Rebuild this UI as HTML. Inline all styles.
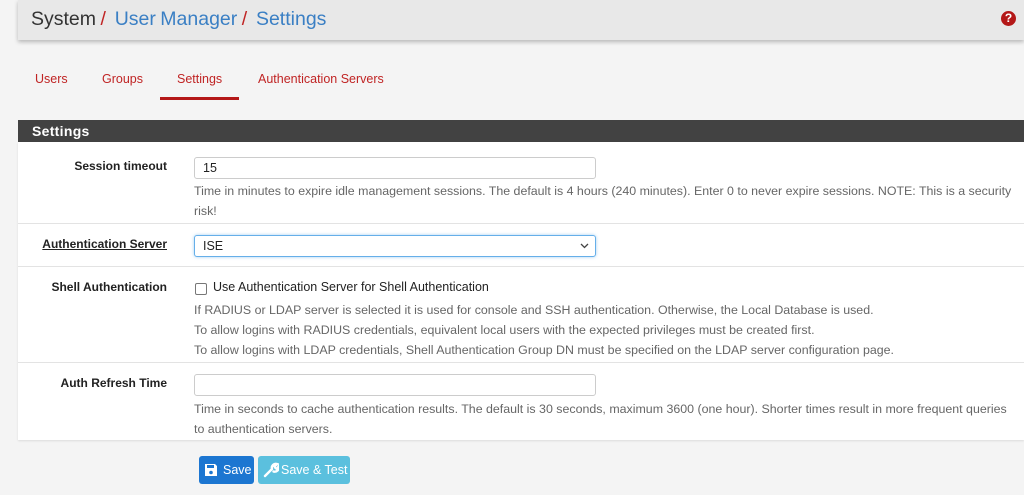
<!DOCTYPE html>
<html><head><style>
body{margin:0;width:1024px;height:495px;background:#f4f4f4;font-family:"Liberation Sans",sans-serif;overflow:hidden;position:relative}
.hdr{position:absolute;left:18px;top:0;width:1006px;height:40px;background:#e8e8e8;box-shadow:0 2px 4px rgba(0,0,0,.25)}
.hdr .t{position:absolute;left:13px;top:8px;font-size:19.5px;color:#333;word-spacing:-1px}
.hdr .t span.l{color:#3a7fc4}.hdr .t span.s{color:#c02424}
.help{position:absolute;right:8px;top:11px;width:15px;height:15px;border-radius:50%;background:#b41818;color:#fff;font-size:12px;font-weight:bold;text-align:center;line-height:15px}
.tab{position:absolute;top:72px;font-size:12.5px;color:#c02424}
.ul{position:absolute;left:160px;top:97px;width:79px;height:3px;background:#b41818}
.ph{position:absolute;left:18px;top:120px;width:1006px;height:22px;background:#424242;color:#fff;font-weight:bold;font-size:14px;line-height:23px;text-indent:14px;letter-spacing:.3px}
.pb{position:absolute;left:18px;top:142px;width:1006px;height:298px;background:#fff;box-shadow:0 1px 2px rgba(0,0,0,.1)}
.sep{position:absolute;left:18px;width:1006px;height:1px;background:#e3e3e3}
.lbl{position:absolute;right:857px;font-size:12px;font-weight:bold;color:#222;white-space:nowrap}
.inp{position:absolute;left:194px;width:400px;height:20px;border:1px solid #ccc;border-radius:3px;background:#fff;font-size:12.5px;line-height:20px;text-indent:8px;color:#222}
.hlp{position:absolute;left:194px;font-size:12.4px;color:#666;line-height:20px;width:818px}
.btn{position:absolute;top:456px;height:28px;border-radius:3px;color:#fff;font-size:12.5px;line-height:28px}
</style></head><body>
<div class="hdr"><div class="t">System <span class="s">/</span>&nbsp; <span class="l">User Manager</span> <span class="s">/</span>&nbsp; <span class="l">Settings</span></div><div class="help">?</div></div>
<div class="tab" style="left:35px">Users</div>
<div class="tab" style="left:102px">Groups</div>
<div class="tab" style="left:177px">Settings</div>
<div class="tab" style="left:258px">Authentication Servers</div>
<div class="ul"></div>
<div class="ph">Settings</div>
<div class="pb"></div>
<div class="lbl" style="top:159px">Session timeout</div>
<div class="inp" style="top:157px">15</div>
<div class="hlp" style="top:181px">Time in minutes to expire idle management sessions. The default is 4 hours (240 minutes). Enter 0 to never expire sessions. NOTE: This is a security risk!</div>
<div class="sep" style="top:223px"></div>
<div class="lbl" style="top:237px;text-decoration:underline">Authentication Server</div>
<div class="inp" style="top:235px;border-color:#66afe9;box-shadow:0 0 3px rgba(102,175,233,.6)">ISE<svg style="position:absolute;right:6px;top:7px" width="9" height="6" viewBox="0 0 9 6"><path d="M1 1l3.5 3.5L8 1" fill="none" stroke="#444" stroke-width="1.3"/></svg></div>
<div class="sep" style="top:266px"></div>
<div class="lbl" style="top:280px">Shell Authentication</div>
<div style="position:absolute;left:195px;top:283px;width:10px;height:10px;border:1px solid #777;border-radius:2px"></div>
<div style="position:absolute;left:213px;top:280px;font-size:12.5px;color:#222">Use Authentication Server for Shell Authentication</div>
<div class="hlp" style="top:300px">If RADIUS or LDAP server is selected it is used for console and SSH authentication. Otherwise, the Local Database is used.<br>To allow logins with RADIUS credentials, equivalent local users with the expected privileges must be created first.<br>To allow logins with LDAP credentials, Shell Authentication Group DN must be specified on the LDAP server configuration page.</div>
<div class="sep" style="top:362px"></div>
<div class="lbl" style="top:376px">Auth Refresh Time</div>
<div class="inp" style="top:374px"></div>
<div class="hlp" style="top:399px">Time in seconds to cache authentication results. The default is 30 seconds, maximum 3600 (one hour). Shorter times result in more frequent queries to authentication servers.</div>
<div class="btn" style="left:199px;width:55px;background:#1c76d1"><svg style="position:absolute;left:5px;top:7px" width="14" height="14" viewBox="0 0 14 14"><path d="M1 1h10l2 2v10H1z" fill="#fff"/><rect x="3" y="2" width="7" height="3" fill="#1c76d1"/><circle cx="7" cy="9.5" r="1.8" fill="#1c76d1"/></svg><span style="position:absolute;left:24px">Save</span></div>
<div class="btn" style="left:258px;width:92px;background:#5bc0de"><svg style="position:absolute;left:5px;top:6px" width="16" height="16" viewBox="0 0 16 16"><path d="M2 14L9 7M9 7a4 4 0 0 1 5-5l-2.5 2.5 1 1.5 1.5 1L15.5 4.5a4 4 0 0 1-5 5" fill="none" stroke="#fff" stroke-width="2.4" stroke-linecap="round"/></svg><span style="position:absolute;left:23px">Save &amp; Test</span></div>
</body></html>
